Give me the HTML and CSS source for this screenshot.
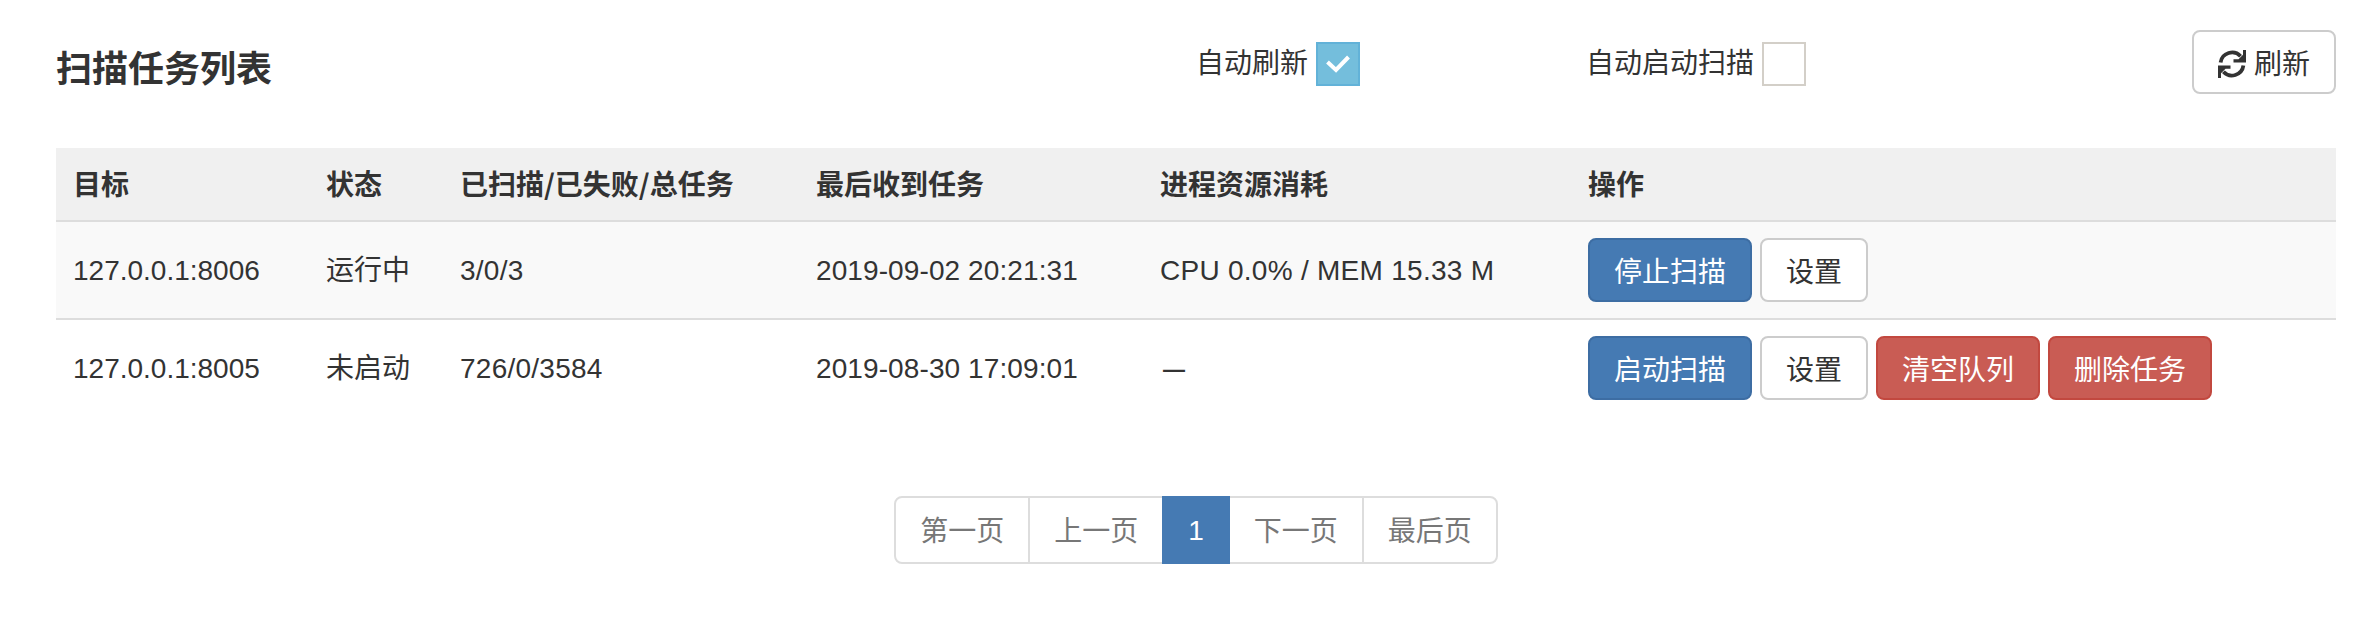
FILE: index.html
```
<!DOCTYPE html>
<html lang="zh-CN">
<head>
    <meta charset="UTF-8">
    <title>扫描任务列表</title>
    <link rel="stylesheet" href="styles.css">
</head>
<body>
    <div class="toolbar">
        <h4 class="title">扫描任务列表</h4>
        <div class="option">
            <span>自动刷新</span>
            <span class="checkbox checked">
                <svg viewBox="0 0 24 18"><path d="M1.5 7 L10 15 L22.5 2"/></svg>
            </span>
        </div>
        <div class="option">
            <span>自动启动扫描</span>
            <span class="checkbox"></span>
        </div>
        <button class="btn btn-default btn-refresh">
            <svg class="icon" viewBox="0 0 28 28">
                <path class="arc" d="M2.6 12.4 A11.6 11.6 0 0 1 22.6 6.2 M25.4 15.6 A11.6 11.6 0 0 1 5.4 21.8"/>
                <path d="M28 0 V12.4 H15.5 V9.3 H20.5 L25 4.8 V0 Z M0 28 V15.6 H12.5 V18.7 H7.5 L3 23.2 V28 Z"/>
            </svg>
            <span>刷新</span>
        </button>
    </div>

    <table class="table">
        <thead>
            <tr>
                <th class="col-target">目标</th>
                <th class="col-status">状态</th>
                <th class="col-count">已扫描/已失败/总任务</th>
                <th class="col-time">最后收到任务</th>
                <th class="col-usage">进程资源消耗</th>
                <th class="col-actions">操作</th>
            </tr>
        </thead>
        <tbody>
            <tr>
                <td class="col-target">127.0.0.1:8006</td>
                <td class="col-status">运行中</td>
                <td class="col-count">3/0/3</td>
                <td class="col-time">2019-09-02 20:21:31</td>
                <td class="col-usage">CPU 0.0% / MEM 15.33 M</td>
                <td class="col-actions">
                    <div class="actions">
                        <button class="btn btn-primary">停止扫描</button>
                        <button class="btn btn-default">设置</button>
                    </div>
                </td>
            </tr>
            <tr>
                <td class="col-target">127.0.0.1:8005</td>
                <td class="col-status">未启动</td>
                <td class="col-count">726/0/3584</td>
                <td class="col-time">2019-08-30 17:09:01</td>
                <td class="col-usage"><span class="empty">—</span></td>
                <td class="col-actions">
                    <div class="actions">
                        <button class="btn btn-primary">启动扫描</button>
                        <button class="btn btn-default">设置</button>
                        <button class="btn btn-danger">清空队列</button>
                        <button class="btn btn-danger">删除任务</button>
                    </div>
                </td>
            </tr>
        </tbody>
    </table>

    <ul class="pagination">
        <li>第一页</li>
        <li>上一页</li>
        <li class="active">1</li>
        <li>下一页</li>
        <li>最后页</li>
    </ul>
</body>
</html>
```
FILE: styles.css
```
* {
    box-sizing: border-box;
}

body {
    margin: 0;
    padding: 30px 18px 0 56px;
    background-color: #fff;
    color: #333;
    font-family: "Liberation Sans", "Noto Sans CJK SC", sans-serif;
    font-size: 28px;
    line-height: 40px;
}

.toolbar {
    display: grid;
    grid-template-columns: 1140px 390px 1fr auto;
    align-items: start;
    height: 118px;
}

.title {
    margin: 20px 0 0;
    font-size: 36px;
    font-weight: 700;
}

.option {
    display: flex;
    gap: 8px;
    padding-top: 12px;
}

.option > span:first-child {
    padding-top: 2px;
}

.checkbox {
    display: flex;
    align-items: center;
    justify-content: center;
    width: 44px;
    height: 44px;
    border: 2px solid #d3cfc8;
}

.checkbox.checked {
    background-color: #74bedc;
    border-color: #62b2d8;
}

.checkbox svg {
    width: 24px;
    height: 18px;
    fill: none;
    stroke: #fff;
    stroke-width: 4;
}

.btn {
    height: 64px;
    padding: 6px 24px 0;
    border: 2px solid transparent;
    border-radius: 8px;
    font: inherit;
    line-height: 54px;
    white-space: nowrap;
}

.btn-default {
    background-color: #fff;
    border-color: #ccc;
    color: #333;
}

.btn-primary {
    background-color: #457ab3;
    border-color: #3d6da3;
    color: #fff;
}

.btn-danger {
    background-color: #c95c54;
    border-color: #c2483f;
    color: #fff;
}

.btn-refresh {
    display: flex;
    align-items: center;
    gap: 8px;
}

.icon {
    width: 28px;
    height: 28px;
    margin-top: -3px;
    fill: #333;
}

.icon .arc {
    fill: none;
    stroke: #333;
    stroke-width: 3.8;
}

.table {
    width: 100%;
    table-layout: fixed;
    border-collapse: separate;
    border-spacing: 0;
}

th,
td {
    padding: 17px 0 15px 17px;
    text-align: left;
    vertical-align: middle;
    white-space: nowrap;
}

th {
    height: 74px;
    padding-top: 15px;
    padding-bottom: 17px;
    background-color: #f0f0f0;
    border-bottom: 2px solid #ddd;
    font-family: "Noto Sans CJK SC", sans-serif;
}

td {
    height: 96px;
}

tbody tr:first-child td {
    height: 98px;
    background-color: #f9f9f9;
    border-bottom: 2px solid #ddd;
}

.col-target { width: 254px; }
.col-status { width: 133px; padding-left: 16px; }
.col-count { width: 356px; }
.col-time { width: 345px; }
.col-usage { width: 428px; padding-left: 16px; }
.col-actions { padding-left: 16px; }

td.col-count { letter-spacing: 0.25px; }
td.col-time { letter-spacing: 0.1px; }
td.col-usage { letter-spacing: 0.27px; }

td.col-actions {
    padding-top: 16px;
    padding-bottom: 16px;
}

.actions {
    display: flex;
    gap: 8px;
}

.empty {
    margin-left: 3px;
    font-size: 22px;
    font-weight: bold;
    vertical-align: 1px;
}

.pagination {
    display: flex;
    justify-content: center;
    margin: 80px 0 0;
    padding: 0;
    list-style: none;
    color: #777;
}

.pagination li {
    height: 68px;
    margin-left: -2px;
    padding: 2px 24px 0;
    border: 2px solid #ddd;
    line-height: 64px;
}

.pagination li:first-child {
    margin-left: 0;
    border-radius: 8px 0 0 8px;
}

.pagination li:last-child {
    border-radius: 0 8px 8px 0;
}

.pagination .active {
    z-index: 1;
    padding-top: 1px;
    background-color: #457ab3;
    border-color: #457ab3;
    color: #fff;
}
```
